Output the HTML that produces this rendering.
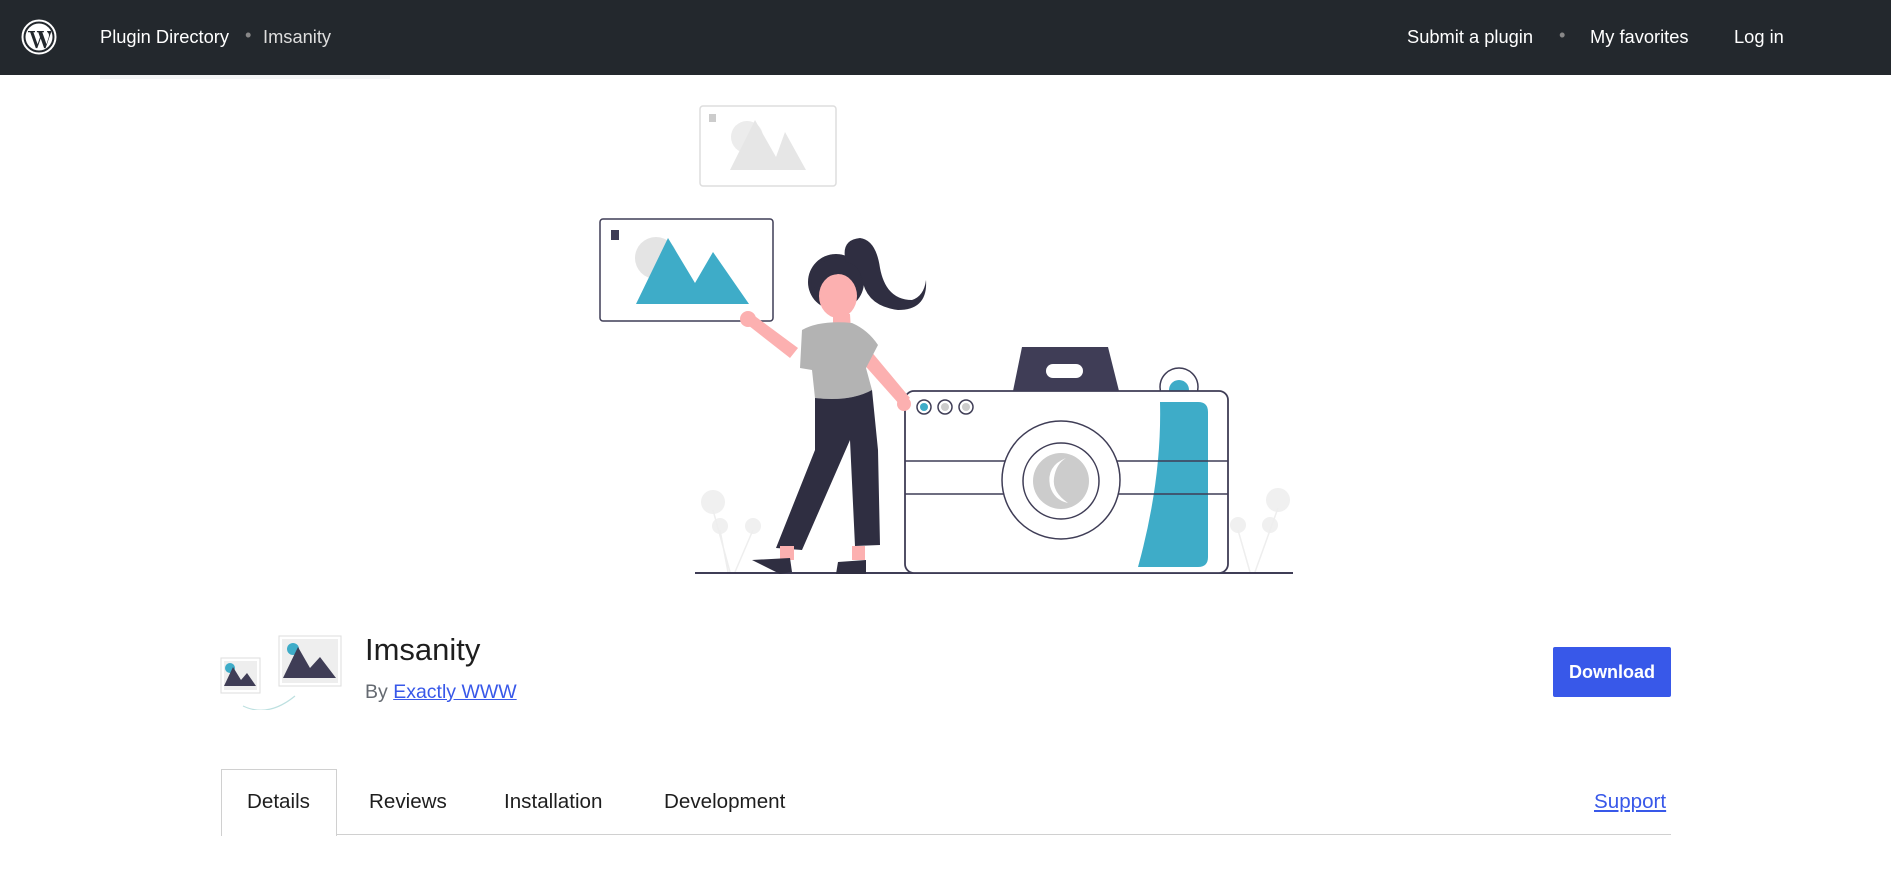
<!DOCTYPE html>
<html><head><meta charset="utf-8"><style>
*{margin:0;padding:0;box-sizing:border-box}
body{width:1891px;height:880px;background:#fff;font-family:"Liberation Sans",sans-serif;position:relative;overflow:hidden;color:#1e1e1e}
.hdr{position:absolute;left:0;top:0;width:1891px;height:75px;background:#23282d;color:#fff;font-size:18.3px}
.hdr span{position:absolute;top:26px}
.a{position:absolute}
.t{font-size:20.6px}
</style></head><body>
<div class="hdr">
<svg class="a" style="left:21px;top:19px" width="36" height="36" viewBox="0 0 36 36"><circle cx="18" cy="18" r="16.5" fill="none" stroke="#fff" stroke-width="2"/><circle cx="18" cy="18" r="13.5" fill="#fff"/><path d="M7 12h7v1.3h-1.6l4.2 12 2.4-7-1.7-5h-1.4V12h7v1.3h-1.6l4.2 12 2.2-7c.9-3-0.3-4.6-1.6-5.3V12h4v1.3l-5.5 15.8h-1.5L19.7 19.5l-3.4 9.6h-1.5L9.2 13.3H7z" fill="#23282d"/></svg>
<span style="left:100px">Plugin Directory</span>
<span style="left:245px;top:24px;color:#888">•</span>
<span style="left:263px;color:#ddd">Imsanity</span>
<span style="left:1407px">Submit a plugin</span>
<span style="left:1559px;top:24px;color:#888">•</span>
<span style="left:1590px">My favorites</span>
<span style="left:1734px">Log in</span>
</div>
<div class="a" style="left:100px;top:75px;width:290px;height:4px;background:#f4f5f6"></div>

<svg class="a" style="left:0;top:0" width="1891" height="600" viewBox="0 0 1891 600">
<rect x="700" y="106" width="136" height="80" rx="3" fill="#fff" stroke="#ddd" stroke-width="1.5"/>
<rect x="709" y="114" width="7" height="8" fill="#ccc"/>
<circle cx="747" cy="137" r="16" fill="#ececec"/>
<path d="M730 170 L755 120 L776 157 L785 132 L806 170Z" fill="#e6e6e6"/>
<rect x="600" y="219" width="173" height="102" rx="3" fill="#fff" stroke="#3f3d56" stroke-width="1.5"/>
<rect x="611" y="230" width="8" height="10" fill="#3f3d56"/>
<circle cx="656" cy="258" r="21" fill="#e4e4e4"/>
<path d="M636 304 L668 238 L695 283 L713 252 L749 304Z" fill="#3eacc8"/>
<g fill="#f0f0f0"><circle cx="713" cy="502" r="12"/><circle cx="720" cy="526" r="8"/><circle cx="753" cy="526" r="8"/><circle cx="1278" cy="500" r="12"/><circle cx="1238" cy="525" r="8"/><circle cx="1270" cy="525" r="8"/></g>
<path d="M713 510 L730 572 M720 530 L728 572 M753 530 L735 572 M1278 508 L1255 572 M1238 530 L1250 572" stroke="#eee" stroke-width="1.5" fill="none"/>
<line x1="695" y1="573" x2="1293" y2="573" stroke="#3f3d56" stroke-width="2"/>
<path d="M1013 391 L1022 347 L1108 347 L1119 391Z" fill="#3f3d56"/>
<rect x="1046" y="364" width="37" height="14" rx="7" fill="#fff"/>
<circle cx="1179" cy="387" r="19" fill="#fff" stroke="#3f3d56" stroke-width="1.5"/>
<circle cx="1179" cy="390" r="10" fill="#3eacc8"/>
<rect x="905" y="391" width="323" height="182" rx="9" fill="#fff" stroke="#3f3d56" stroke-width="1.8"/>
<path d="M1160 402 L1198 402 Q1208 402 1208 412 L1208 557 Q1208 567 1198 567 L1138 567 Q1162 480 1160 402Z" fill="#3eacc8"/>
<line x1="905" y1="461" x2="1228" y2="461" stroke="#3f3d56" stroke-width="1.5"/>
<line x1="905" y1="494" x2="1228" y2="494" stroke="#3f3d56" stroke-width="1.5"/>
<circle cx="1061" cy="480" r="59" fill="#fff" stroke="#3f3d56" stroke-width="1.5"/>
<circle cx="1061" cy="481" r="38" fill="#fff" stroke="#3f3d56" stroke-width="1.5"/>
<circle cx="1061" cy="481" r="28" fill="#ccc"/>
<path d="M1066 458 Q1046 466 1050 486 Q1054 500 1068 503 Q1052 492 1054 478 Q1056 464 1066 458Z" fill="#fff"/>
<circle cx="924" cy="407" r="7" fill="#fff" stroke="#3f3d56" stroke-width="1.5"/><circle cx="924" cy="407" r="4" fill="#3eacc8"/>
<circle cx="945" cy="407" r="7" fill="#fff" stroke="#3f3d56" stroke-width="1.5"/><circle cx="945" cy="407" r="4" fill="#ccc"/>
<circle cx="966" cy="407" r="7" fill="#fff" stroke="#3f3d56" stroke-width="1.5"/><circle cx="966" cy="407" r="4" fill="#ccc"/>
<path d="M744 322 L790 358 L798 348 L752 314Z" fill="#fcb0b0" />
<circle cx="748" cy="319" r="8" fill="#fcb0b0"/>
<path d="M860 360 L900 405 L910 398 L870 350Z" fill="#fcb0b0"/>
<circle cx="904" cy="404" r="7" fill="#fcb0b0"/>
<path d="M833 314 L850 314 L851 330 L833 330Z" fill="#fcb0b0"/>
<path d="M802 330 Q820 320 852 323 Q868 330 878 345 L866 368 L872 390 Q850 402 815 398 L812 370 L800 368Z" fill="#b3b3b3"/>
<path d="M815 398 Q850 402 872 390 L878 450 L880 545 L855 546 L850 440 L802 550 L776 548 L815 450Z" fill="#2f2e41"/>
<rect x="780" y="546" width="14" height="14" fill="#fcb0b0"/><rect x="852" y="546" width="13" height="14" fill="#fcb0b0"/>
<path d="M752 560 L790 558 L792 572 L780 574Z" fill="#2f2e41"/>
<path d="M838 562 L866 560 L866 574 L836 574Z" fill="#2f2e41"/>
<circle cx="836" cy="282" r="28" fill="#2f2e41"/>
<ellipse cx="838" cy="296" rx="19" ry="22" fill="#fcb0b0"/>
<path d="M812 292 Q808 262 836 258 Q862 260 862 288 Q850 272 838 274 Q820 276 812 292Z" fill="#2f2e41"/>
<path d="M846 262 Q840 240 860 238 Q876 240 880 268 Q886 300 912 300 Q924 296 926 280 Q928 310 898 310 Q866 306 862 278 Q858 264 846 262Z" fill="#2f2e41"/>
</svg>

<svg class="a" style="left:218px;top:630px" width="130" height="80" viewBox="0 0 130 80">
<rect x="3" y="28" width="39" height="35" fill="#fff" stroke="#ddd"/>
<rect x="6" y="31" width="33" height="29" fill="#eee"/>
<circle cx="12" cy="38" r="5" fill="#3eacc8"/>
<path d="M6 56 L15 37 L23 50 L29 43 L38 56Z" fill="#3f3d56"/>
<rect x="61" y="6" width="62" height="50" fill="#fff" stroke="#ddd"/>
<rect x="64" y="9" width="56" height="44" fill="#eee"/>
<circle cx="75" cy="19" r="6" fill="#3eacc8"/>
<path d="M65 48 L80 17 L92 38 L102 27 L118 48Z" fill="#3f3d56"/>
<path d="M25 76 Q50 88 77 66" fill="none" stroke="#bde0e0" stroke-width="1.2"/>
</svg>
<div class="a" style="left:365px;top:632px;font-size:31px;color:#1e1e1e">Imsanity</div>
<div class="a" style="left:365px;top:681px;font-size:19.5px;color:#656a71">By <span style="color:#3858e9;text-decoration:underline">Exactly WWW</span></div>
<div class="a" style="left:1553px;top:647px;width:118px;height:50px;background:#3858e9;border-radius:2px;color:#fff;font-size:18px;font-weight:bold;text-align:center;line-height:50px">Download</div>

<div class="a" style="left:221px;top:834px;width:1450px;height:1px;background:#d0d0d0"></div>
<div class="a" style="left:221px;top:769px;width:116px;height:67px;background:#fff;border:1px solid #d0d0d0;border-bottom:none"></div>
<div class="a t" style="left:247px;top:790px">Details</div>
<div class="a t" style="left:369px;top:790px">Reviews</div>
<div class="a t" style="left:504px;top:790px">Installation</div>
<div class="a t" style="left:664px;top:790px">Development</div>
<div class="a t" style="left:1594px;top:790px;color:#3858e9;text-decoration:underline">Support</div>
</body></html>
